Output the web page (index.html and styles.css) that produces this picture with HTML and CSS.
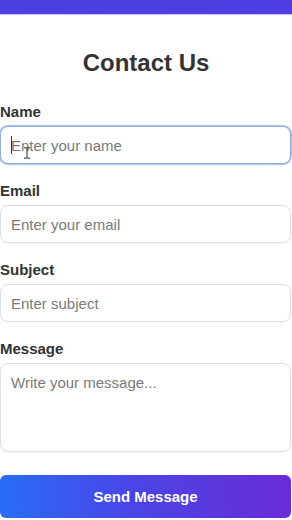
FILE: index.html
```html
<!DOCTYPE html>
<html>
<head>
<meta charset="utf-8">
<link rel="stylesheet" href="styles.css">
</head>
<body>
<div class="topbar"></div>
<main class="page">
  <h1 class="title">Contact Us</h1>
  <form class="form">
    <div class="group">
      <label class="label">Name</label>
      <div class="field-wrap">
        <input class="input focused" type="text" placeholder="Enter your name">
        <span class="caret"></span>
        <svg class="ibeam" width="8" height="12" viewBox="0 0 8 12"><path d="M1 0.8h2.2l0.8 0.7 0.8-0.7H7M4 1.5v9M1 11.2h2.2l0.8-0.7 0.8 0.7H7" fill="none" stroke="#222" stroke-width="1"/></svg>
      </div>
    </div>
    <div class="group">
      <label class="label">Email</label>
      <input class="input" type="email" placeholder="Enter your email">
    </div>
    <div class="group">
      <label class="label">Subject</label>
      <input class="input" type="text" placeholder="Enter subject">
    </div>
    <div class="group">
      <label class="label">Message</label>
      <textarea class="input textarea" placeholder="Write your message..."></textarea>
    </div>
    <button class="send" type="button">Send Message</button>
  </form>
</main>
</body>
</html>
```
FILE: styles.css
```css
* { box-sizing: border-box; }
html, body { margin: 0; padding: 0; background: #fff; }
body {
  font-family: "Liberation Sans", Arial, sans-serif;
  color: #333;
  width: 292px;
  overflow: hidden;
}
.topbar {
  height: 14px;
  background: linear-gradient(90deg, #4b3fe0, #4f3de2);
  box-shadow: 0 1px 1px rgba(120, 100, 230, 0.35);
}
.page { padding: 0; }
.title {
  margin: 35px 0 25px;
  font-size: 24px;
  line-height: 28px;
  font-weight: 700;
  text-align: center;
  color: #333;
}
.form {
  display: flex;
  flex-direction: column;
  gap: 17px;
}
.group {
  display: flex;
  flex-direction: column;
  gap: 4px;
}
.label {
  font-size: 15px;
  line-height: 20px;
  font-weight: 700;
  color: #333;
}
.field-wrap { position: relative; }
.input {
  display: block;
  width: 291px;
  height: 38px;
  margin: 0;
  padding: 0 10px;
  border: 1px solid #e0e0e0;
  border-radius: 8px;
  font-family: "Liberation Sans", Arial, sans-serif;
  font-size: 15px;
  color: #333;
  background: #fff;
  outline: none;
  box-shadow: 0 1px 2px rgba(0, 0, 0, 0.04);
}
.input::placeholder { color: #7a7a7a; }
.input.focused {
  border: 1px solid #8fb0dc;
  box-shadow: 0 0 0 1px rgba(110, 150, 215, 0.45), 0 0 3px rgba(110, 150, 215, 0.5);
}
.caret {
  position: absolute;
  left: 11px;
  top: 10px;
  width: 1px;
  height: 18px;
  background: #333;
}
.ibeam {
  position: absolute;
  left: 23px;
  top: 21px;
}
.textarea {
  height: 89px;
  padding: 10px 10px;
  line-height: 18px;
  resize: none;
}
.send {
  margin-top: 6px;
  width: 291px;
  height: 43px;
  border: none;
  border-radius: 6px;
  background: linear-gradient(90deg, #2a6df7 0%, #4a45e6 45%, #6a2bd6 100%);
  color: #fff;
  font-family: "Liberation Sans", Arial, sans-serif;
  font-size: 15px;
  font-weight: 700;
  cursor: pointer;
}
```
